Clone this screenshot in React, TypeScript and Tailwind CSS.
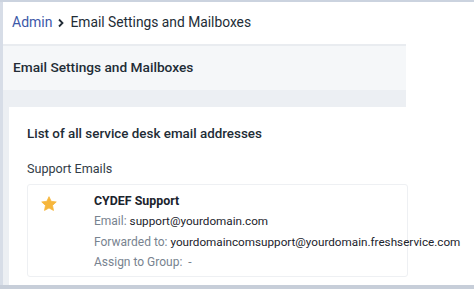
export default function App() {
  return (
    <div
      className="w-[474px] h-[289px] overflow-hidden flex flex-col bg-[#d7dde7] text-[#222c36]"
      style={{ fontFamily: 'Roboto, "Open Sans", sans-serif' }}
    >
      <div className="h-[2px] bg-[#cbd3df]" />
      <div className="flex-1 flex flex-col ml-[3px] bg-white">
        {/* breadcrumb */}
        <div className="h-[42px] flex items-center gap-[5px] pl-[9px] text-[14px]">
          <span className="text-[#3d58a8]">Admin</span>
          <svg width="8" height="10" viewBox="0 0 8 10" className="mt-[1px]">
            <path d="M2 1.5 L5.5 5 L2 8.5" fill="none" stroke="#222c36" strokeWidth="1.8" />
          </svg>
          <span className="text-[13.8px]">Email Settings and Mailboxes</span>
        </div>

        <div className="w-[403px] flex-1 flex flex-col">
          <div className="h-[2px] bg-[#e9ecf0]" />
          <div className="h-[44px] bg-[#f5f7f9] flex items-center pl-[10px] text-[13.7px] font-medium">
            Email Settings and Mailboxes
          </div>
          <div className="flex-1 bg-[#eceff3] pt-[17px] pl-[6px] flex flex-col">
            <div className="flex-1 bg-white pl-[18px] flex flex-col">
              <div className="mt-[17px] text-[13.4px] font-medium leading-[20px]">
                List of all service desk email addresses
              </div>
              <div className="mt-[15px] text-[12.6px] leading-[20px] text-[#333d48]">Support Emails</div>
              <div className="mt-[5px] w-[381px] h-[93px] border border-[#eef0f3] rounded-[3px] flex">
                <div className="w-[66px] shrink-0 pl-[12px] pt-[10px]">
                  <svg width="18" height="18" viewBox="0 0 24 24">
                    <path
                      d="M12 2.2l2.9 6.2 6.8.8-5 4.7 1.3 6.7L12 17.3l-6 3.3 1.3-6.7-5-4.7 6.8-.8z"
                      fill="#f6b63c"
                      stroke="#f6b63c"
                      strokeWidth="1"
                      strokeLinejoin="round"
                    />
                  </svg>
                </div>
                <div className="pt-[6px] text-[12px] leading-[20.5px] whitespace-nowrap">
                  <div className="font-bold text-[12.4px] text-[#1b232c]">CYDEF Support</div>
                  <div>
                    <span className="text-[#78838f]">Email:</span>{" "}
                    <span className="text-[11.7px] text-[#1b232c]">support@yourdomain.com</span>
                  </div>
                  <div>
                    <span className="text-[#78838f]">Forwarded to:</span>{" "}
                    <span className="text-[11.7px] text-[#1b232c]">yourdomaincomsupport@yourdomain.freshservice.com</span>
                  </div>
                  <div className="text-[#78838f]">
                    Assign to Group:&nbsp; -
                  </div>
                </div>
              </div>
              <div className="h-[8px]" />
            </div>
          </div>
        </div>
      </div>
      <div className="h-[5px] bg-[#c7ced9]" />
    </div>
  );
}
